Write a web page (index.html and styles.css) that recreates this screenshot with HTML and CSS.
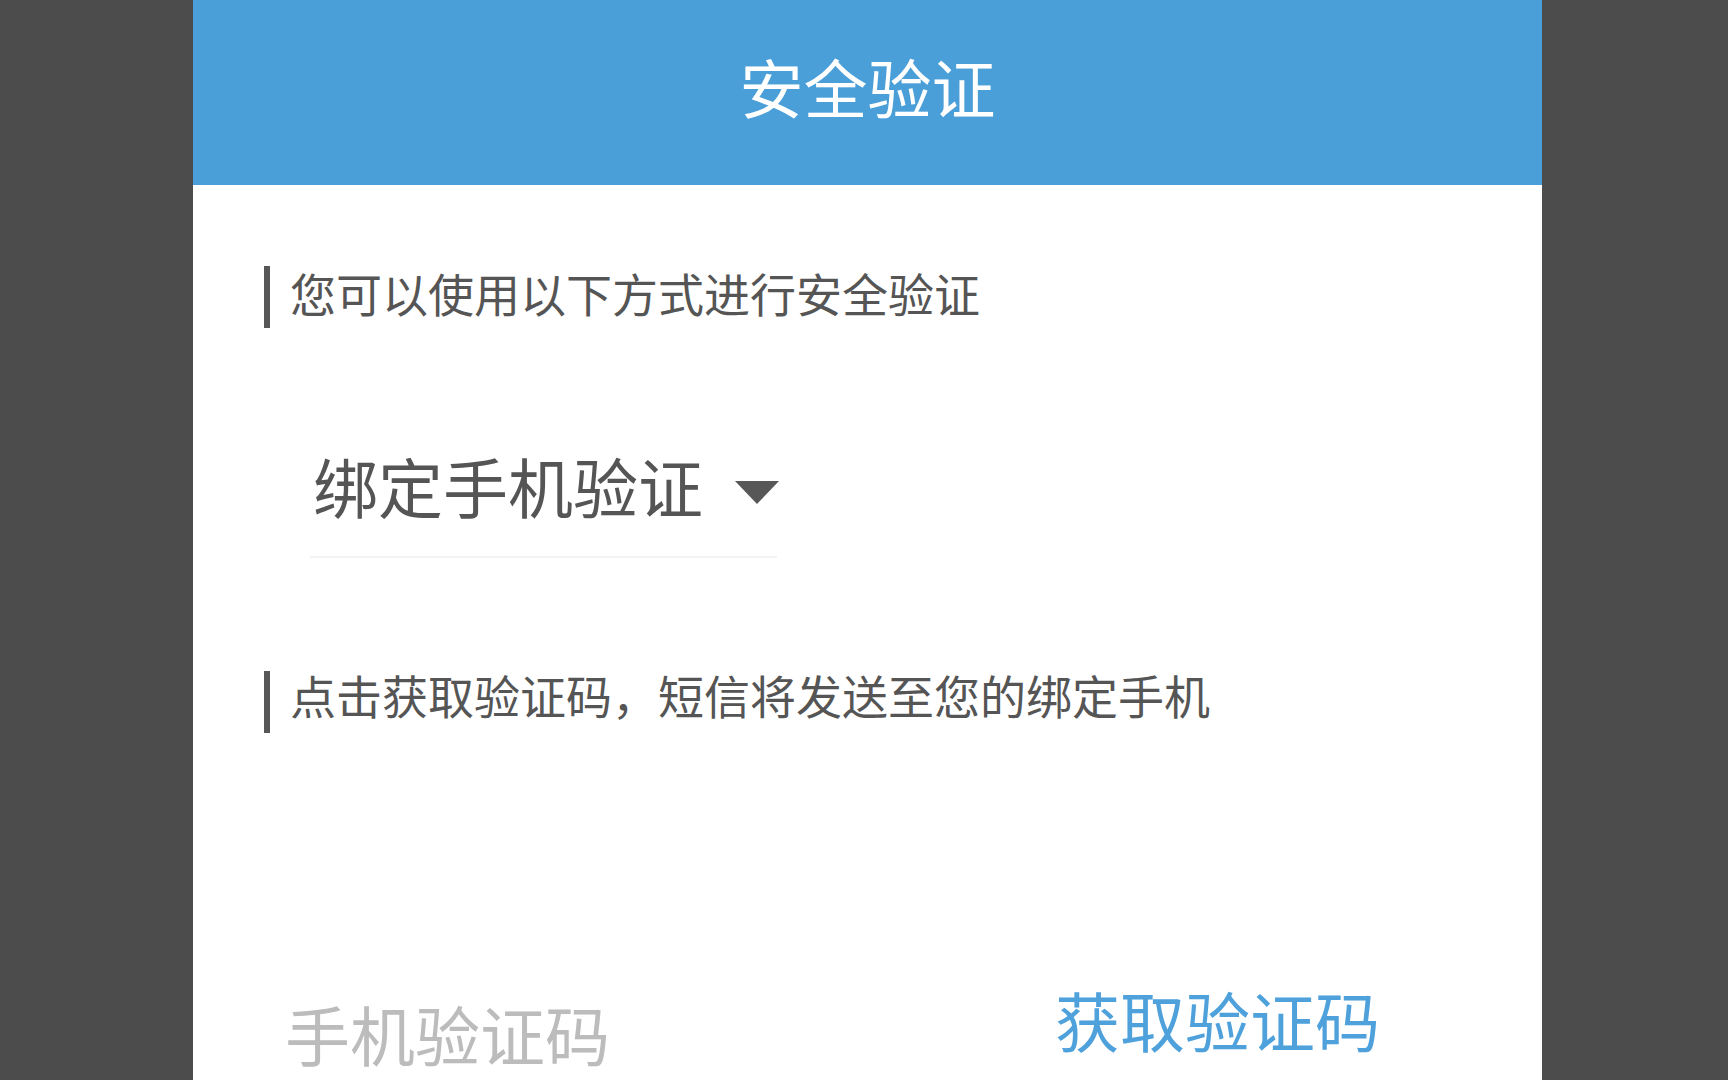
FILE: index.html
```html
<!DOCTYPE html>
<html lang="zh-CN">
<head>
<meta charset="utf-8">
<title>安全验证</title>
<link rel="stylesheet" href="styles.css">
</head>
<body>
<div class="panel">
  <header class="header"><h1 class="title">安全验证</h1></header>
  <div class="label label-first">您可以使用以下方式进行安全验证</div>
  <div class="select">
    <span class="select-text">绑定手机验证</span>
    <svg class="caret" width="44" height="23" viewBox="0 0 44 23"><polygon points="0,0 44,0 22,23" fill="#575757"/></svg>
  </div>
  <div class="label label-second">点击获取验证码，短信将发送至您的绑定手机</div>
  <div class="code-row">
    <span class="placeholder">手机验证码</span>
    <span class="get-code">获取验证码</span>
  </div>
</div>
</body>
</html>
```

FILE: styles.css
```css
html, body {
  margin: 0;
  padding: 0;
}
body {
  background: #4c4c4c;
  font-family: "Noto Sans CJK SC", "Noto Sans", sans-serif;
  height: 1080px;
  overflow: hidden;
}
.panel {
  margin-left: 193px;
  width: 1349px;
  height: 1080px;
  background: #ffffff;
  display: flex;
  flex-direction: column;
  overflow: hidden;
}
.panel > * {
  flex-shrink: 0;
}
.header {
  height: 185px;
  box-sizing: border-box;
  padding-top: 50px;
  background: #4b9fd9;
  text-align: center;
}
.title {
  margin: 0;
  font-size: 64px;
  line-height: 70px;
  font-weight: normal;
  color: #ffffff;
}
.label {
  align-self: flex-start;
  margin-left: 71px;
  border-left: 6px solid #575757;
  padding-left: 20px;
  height: 62px;
  font-size: 46px;
  line-height: 52px;
  color: #555555;
  white-space: nowrap;
}
.label-first {
  margin-top: 81px;
}
.label-second {
  margin-top: 113px;
  line-height: 46px;
}
.select {
  align-self: flex-start;
  margin-top: 122px;
  margin-left: 117px;
  width: 467px;
  padding-bottom: 36px;
  border-bottom: 2px solid #f3f3f3;
  display: flex;
  align-items: center;
}
.select-text {
  padding-left: 3px;
  font-size: 65px;
  line-height: 70px;
  color: #555555;
  white-space: nowrap;
}
.caret {
  flex-shrink: 0;
  margin-left: 32px;
  margin-top: 14px;
}
.code-row {
  margin-top: 251px;
  padding-left: 92px;
  padding-right: 162px;
  display: flex;
  justify-content: space-between;
  align-items: flex-start;
}
.placeholder {
  margin-top: 14px;
  font-size: 65px;
  line-height: 70px;
  color: #bcbcbc;
  white-space: nowrap;
}
.get-code {
  font-size: 65px;
  line-height: 70px;
  color: #4fa1dc;
  white-space: nowrap;
}
```
